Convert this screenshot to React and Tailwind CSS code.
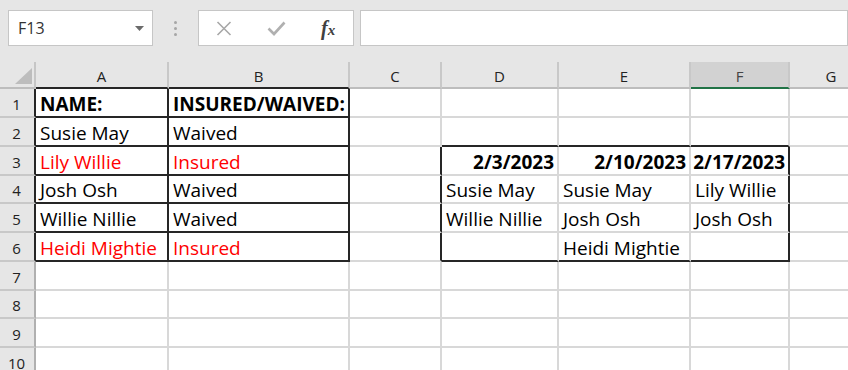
import React from "react";

const COLS = ["A", "B", "C", "D", "E", "F", "G"];

const DATA = {
  1: { A: { t: "NAME:", b: true }, B: { t: "INSURED/WAIVED:", b: true } },
  2: { A: { t: "Susie May" }, B: { t: "Waived" } },
  3: {
    A: { t: "Lily Willie", red: true },
    B: { t: "Insured", red: true },
    D: { t: "2/3/2023", b: true, right: true },
    E: { t: "2/10/2023", b: true, right: true },
    F: { t: "2/17/2023", b: true, right: true },
  },
  4: {
    A: { t: "Josh Osh" },
    B: { t: "Waived" },
    D: { t: "Susie May" },
    E: { t: "Susie May" },
    F: { t: "Lily Willie" },
  },
  5: {
    A: { t: "Willie Nillie" },
    B: { t: "Waived" },
    D: { t: "Willie Nillie" },
    E: { t: "Josh Osh" },
    F: { t: "Josh Osh" },
  },
  6: {
    A: { t: "Heidi Mightie", red: true },
    B: { t: "Insured", red: true },
    E: { t: "Heidi Mightie" },
  },
};

const ROWS = [1, 2, 3, 4, 5, 6, 7, 8, 9, 10];

function rightDark(r, c) {
  if (r >= 1 && r <= 6 && (c === "A" || c === "B")) return true;
  if (r >= 3 && r <= 6 && (c === "C" || c === "F")) return true;
  return false;
}
function bottomDark(r, c) {
  if (r >= 1 && r <= 6 && (c === "A" || c === "B")) return true;
  if ((r === 2 || r === 6) && (c === "D" || c === "E" || c === "F")) return true;
  return false;
}

function Cell({ r, c }) {
  const d = (DATA[r] && DATA[r][c]) || null;
  const rc = rightDark(r, c) ? "border-r-[#262626]" : "border-r-[#d8d8d8]";
  const bc = bottomDark(r, c) ? "border-b-[#262626]" : "border-b-[#d8d8d8]";
  return (
    <div
      className={
        "border-r-2 border-b-2 flex items-end overflow-visible whitespace-nowrap px-[4px] " +
        rc +
        " " +
        bc +
        " " +
        (d && d.right ? "justify-end pr-[3px]" : "justify-start")
      }
    >
      {d ? (
        <span
          className={
            "leading-[24px] text-[19px] " +
            (d.b ? "font-bold " : "font-normal ") +
            (d.red ? "text-[#ff0000]" : "text-black")
          }
        >
          {d.t}
        </span>
      ) : null}
    </div>
  );
}

export default function App() {
  return (
    <div className="w-[848px] h-[370px] overflow-hidden bg-white font-['Open_Sans',sans-serif]">
      {/* toolbar */}
      <div className="h-[62px] bg-[#e6e6e6] flex items-start pt-[10px]">
        <div className="ml-[8px] w-[145px] h-[36px] bg-white border border-[#c6c6c6] flex items-center justify-between pl-[9px] pr-[8px]">
          <span className="text-[16px] text-[#333333] leading-none">F13</span>
          <svg width="9" height="5" viewBox="0 0 9 5">
            <path d="M0 0 L9 0 L4.5 5 Z" fill="#6b6b6b" />
          </svg>
        </div>
        <div className="w-[45px] h-[36px] flex flex-col items-center justify-center gap-[3px]">
          <div className="w-[3px] h-[3px] rounded-full bg-[#a6a6a6]" />
          <div className="w-[3px] h-[3px] rounded-full bg-[#a6a6a6]" />
          <div className="w-[3px] h-[3px] rounded-full bg-[#a6a6a6]" />
        </div>
        <div className="w-[156px] h-[36px] bg-white border border-[#c6c6c6] flex items-center pl-[17px]">
          <svg width="16" height="15" viewBox="0 0 16 15">
            <path d="M1.5 1 L14.5 14 M14.5 1 L1.5 14" stroke="#a8a8a8" strokeWidth="1.6" fill="none" />
          </svg>
          <svg className="ml-[35px]" width="19" height="15" viewBox="0 0 19 15">
            <path d="M1.5 7.5 L7 13 L17.5 1.5" stroke="#b0b0b0" strokeWidth="2.6" fill="none" />
          </svg>
          <span className="ml-[35px] font-['Liberation_Serif',serif] italic font-bold text-[#404040] text-[20px] leading-none">
            f<span className="text-[15px]">x</span>
          </span>
        </div>
        <div className="ml-[6px] flex-1 h-[36px] bg-white border border-[#c6c6c6]" />
      </div>

      {/* sheet grid */}
      <div className="grid grid-cols-[36px_133px_181px_92px_117px_132px_99px_84px] grid-rows-[27px_29px_29px_29px_28px_29px_29px_29px_28px_29px_29px]">
        {/* corner */}
        <div className="bg-[#e6e6e6] border-r-2 border-r-[#c6c6c6] border-b-2 border-b-[#bdbdbd] flex items-end justify-start pl-[15px] pb-[3px]">
          <svg width="17" height="16" viewBox="0 0 17 16">
            <path d="M17 0 L17 16 L0 16 Z" fill="#bdbdbd" />
          </svg>
        </div>
        {COLS.map((c) => {
          const selected = c === "F";
          const dark = c === "A" || c === "B";
          return (
            <div
              key={c}
              className={
                "border-r-2 border-r-[#c8c8c8] border-b-2 flex items-center justify-center pt-[3px] text-[15px] " +
                (selected
                  ? "bg-[#d2d2d2] border-b-[#217346] text-[#444444]"
                  : dark
                  ? "bg-[#e6e6e6] border-b-[#262626] text-[#222222]"
                  : "bg-[#e6e6e6] border-b-[#bdbdbd] text-[#222222]")
              }
            >
              {c}
            </div>
          );
        })}
        {ROWS.map((r) => (
          <React.Fragment key={r}>
            <div
              className={
                "bg-[#e6e6e6] border-r-2 border-b-2 border-b-[#c8c8c8] flex items-end justify-center text-[15px] text-[#222222] " +
                (r <= 6 ? "border-r-[#262626]" : "border-r-[#b0b0b0]")
              }
            >
              <span className="leading-[24px] pr-[1px]">{r}</span>
            </div>
            {COLS.map((c) => (
              <Cell key={c} r={r} c={c} />
            ))}
          </React.Fragment>
        ))}
      </div>
    </div>
  );
}
